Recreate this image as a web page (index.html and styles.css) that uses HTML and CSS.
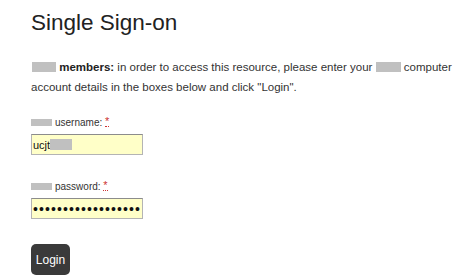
FILE: index.html
```html
<!DOCTYPE html>
<html>
<head>
<meta charset="utf-8">
<link rel="stylesheet" href="styles.css">
</head>
<body>
<div class="page">
  <h1 class="title">Single Sign-on</h1>
  <p class="intro"><span class="redact redact-a"></span> <strong>members:</strong> in order to access this resource, please enter your <span class="redact redact-b"></span> computer account details in the boxes below and click "Login".</p>
  <form class="login-form">
    <div class="field">
      <label class="field-label" for="user"><span class="redact redact-label"></span>username: <abbr class="req" title="required">*</abbr></label>
      <div class="input-wrap">
        <input class="text-input" id="user" type="text" value="ucjt">
        <span class="redact redact-value"></span>
      </div>
    </div>
    <div class="field">
      <label class="field-label" for="pass"><span class="redact redact-label"></span>password: <abbr class="req" title="required">*</abbr></label>
      <div class="input-wrap">
        <input class="text-input pass-input" id="pass" type="password" value="abcdefghijklmnopqrstuvwx">
      </div>
    </div>
    <button class="login-btn" type="button">Login</button>
  </form>
</div>
</body>
</html>
```
FILE: styles.css
```css
html, body {
  margin: 0;
  padding: 0;
  background: #ffffff;
}

body {
  font-family: "Liberation Sans", Arial, sans-serif;
  color: #333333;
}

.page {
  padding: 8px 0 0 31px;
}

.title {
  margin: 0;
  font-size: 22.5px;
  line-height: 30px;
  font-weight: normal;
  color: #222222;
}

.intro {
  margin: 19px 0 0 0;
  font-size: 11.5px;
  line-height: 20px;
  width: 430px;
}

.intro strong {
  color: #222;
}

.redact {
  display: inline-block;
  background: #c0c0c0;
}

.redact-a {
  width: 24px;
  height: 10px;
  margin-left: 1px;
  vertical-align: -1px;
}

.redact-b {
  width: 25px;
  height: 10px;
  vertical-align: -1px;
}

.login-form {
  margin-top: 19px;
}

.field {
  margin-bottom: 25px;
}

.field-label {
  display: block;
  font-size: 10px;
  line-height: 14px;
  color: #333;
}

.redact-label {
  width: 21px;
  height: 7px;
  margin-right: 3px;
  vertical-align: 0;
}

.req {
  color: #c33;
  text-decoration: none;
  border-bottom: 1px dotted #c33;
  font-size: 11px;
  line-height: 10px;
  display: inline-block;
  vertical-align: 1px;
}

.input-wrap {
  position: relative;
  margin-top: 4px;
  width: 112px;
  height: 21px;
}

.text-input {
  box-sizing: border-box;
  width: 112px;
  height: 21px;
  margin: 0;
  padding: 0 1px;
  border: 1px solid #b4b4b4;
  border-top-color: #8c8c8c;
  background: #ffffc8;
  font-family: "Liberation Sans", Arial, sans-serif;
  font-size: 11px;
  color: #111;
  outline: none;
}

.pass-input {
  font-size: 14px;
  letter-spacing: 1.1px;
}

.redact-value {
  position: absolute;
  left: 19px;
  top: 5px;
  width: 22px;
  height: 11px;
}

.login-btn {
  display: block;
  margin-top: 0;
  width: 39px;
  height: 31px;
  padding: 0;
  border: none;
  border-radius: 5px;
  background: #3a3a3a;
  color: #ffffff;
  font-family: "Liberation Sans", Arial, sans-serif;
  font-size: 12px;
}
```
